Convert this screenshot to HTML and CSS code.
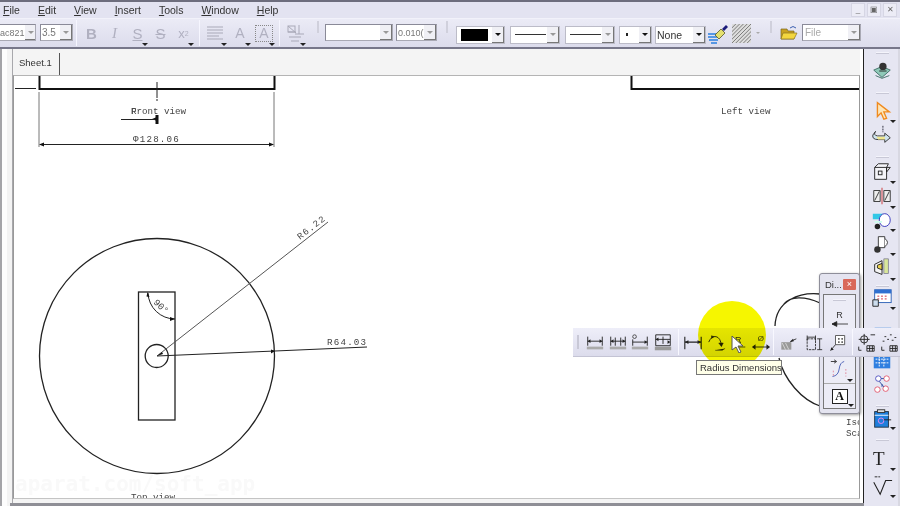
FILE: index.html
```html
<!DOCTYPE html>
<html lang="en">
<head>
<meta charset="utf-8">
<title>Drafting</title>
<link rel="stylesheet" href="styles.css">
</head>
<body>
<div class="app">
  <header class="menubar">
    <nav class="menus">
      <span><u>F</u>ile</span><span><u>E</u>dit</span><span><u>V</u>iew</span><span><u>I</u>nsert</span><span><u>T</u>ools</span><span><u>W</u>indow</span><span><u>H</u>elp</span>
    </nav>
    <div class="winbtns">
      <span class="winbtn">_</span><span class="winbtn">&#9635;</span><span class="winbtn">&#10005;</span>
    </div>
  </header>

  <div class="toolbar">
    <div class="combo w36 flush"><span class="val">ac821</span><i class="arrow"></i></div>
    <div class="combo w33"><span class="val">3.5</span><i class="arrow"></i></div>
    <b class="sep s-a"></b>
    <span class="ic fb">B</span>
    <span class="ic fi">I</span>
    <span class="ic fu">S<i class="drop"></i></span>
    <span class="ic fs">S</span>
    <span class="ic fx">x<sup>2</sup><i class="drop"></i></span>
    <b class="sep s-b"></b>
    <span class="ic24"><svg viewBox="0 0 24 24"><path d="M3 6h16M3 9h16M3 12h16M3 15h12M3 18h16" stroke="#a9a9b8" fill="none"/></svg><i class="drop"></i></span>
    <span class="ic24 ta">A<i class="drop"></i></span>
    <span class="ic24 ta boxed"><em>A</em><i class="drop"></i></span>
    <b class="sep s-c"></b>
    <span class="ic24"><svg viewBox="0 0 24 24"><path d="M5 5l8 7M5 11h8M16 4v9M12 13h9M6 16h12M8 20h8" stroke="#a9a9b8" fill="none"/><rect x="5" y="5" width="7" height="6" fill="none" stroke="#a9a9b8"/></svg><i class="drop"></i></span>
    <b class="grip g-a"></b>
    <div class="combo w68"><i class="arrow"></i></div>
    <div class="combo w41"><span class="val small">0.010(</span><i class="arrow"></i></div>
    <b class="grip g-b"></b>
    <div class="combo lo w49"><span class="swatch"></span><i class="arrow dark"></i></div>
    <div class="combo lo w50"><span class="ln"></span><i class="arrow"></i></div>
    <div class="combo lo w50 m5"><span class="ln"></span><i class="arrow"></i></div>
    <div class="combo lo w33 m4"><span class="dot"></span><i class="arrow dark"></i></div>
    <div class="combo lo w51 m3"><span class="val none">None</span><i class="arrow dark"></i></div>
    <svg class="brush" viewBox="0 0 22 20"><path d="M1 10h9M1 13h11M2 16h9M4 19h6" stroke="#2a7fe0" stroke-width="1.4"/><path d="M8 11l6-6 4 4-6 6z" fill="#e4e070" stroke="#55552a" stroke-width=".8"/><path d="M15 5l4-4 2 2-4 4z" fill="#1a1a7a"/></svg>
    <svg class="hatch" viewBox="0 0 20 20"><rect width="20" height="20" fill="#ddd"/><path d="M-2 6L6-2M-2 10L10-2M-2 14L14-2M-2 18L18-2M0 20L20 0M4 20L22 2M8 20L22 6M12 20L22 10M16 20L22 14" stroke="#777" stroke-width="1"/></svg>
    <i class="tiny"></i>
    <b class="grip g-c"></b>
    <svg class="folder" viewBox="0 0 18 16"><path d="M1 4h6l1 2h6v8H1z" fill="#c9a21f" stroke="#7a6420" stroke-width=".7"/><path d="M3 8h14l-3 6H1z" fill="#f3d63e" stroke="#8a7420" stroke-width=".7"/><path d="M10 3q3-3 6 0" stroke="#3b5fb0" fill="none"/></svg>
    <div class="combo w59 m4"><span class="val muted">File</span><i class="arrow"></i></div>
  </div>

  <div class="main">
    <div class="leftrail"></div>
    <section class="workspace">
      <div class="tabs"><span class="tab">Sheet.1</span></div>
      <div class="sheet">
        <svg class="drawing" viewBox="13 75 847 423">
          <text class="wm" x="15" y="491">aparat.com/soft_app</text>

          <path class="heavy" d="M39.500 76v13h235v-13M631.500 76v13H859"/>
          <path class="thin" d="M15 88.500h21M157 82v16M157 99v2"/>
          <path class="grey" d="M39 92v55M274 92v55"/>
          <path class="thin" d="M41 144.500h232"/>
          <path class="fill" d="M39 144.500l5-2v4zM274 144.500l-5-2v4zM152 119l5-2v4z"/>
          <path class="thin" d="M121 119.500h34"/>
          <rect class="fill" x="155.500" y="115" width="3" height="9"/>
          <text class="cad" x="131" y="114">R</text>
          <text class="cad" x="131" y="114">Front view</text>
          <text class="cad" x="721" y="114">Left view</text>
          <text class="cad wide" x="133" y="141.500">&#934;128.06</text>

          <circle class="part" cx="157" cy="356" r="117.500"/>
          <rect class="part" x="138.500" y="292" width="36.500" height="128"/>
          <circle class="part" cx="156.700" cy="356" r="11.500"/>
          <path class="grey dark" d="M157 356L328 222"/>
          <path class="thin" d="M157 356L275 351L367 347"/>
          <path class="thin" d="M148 293A27 27 0 0 0 175 319"/>
          <path class="fill" d="M147.500 292l2 5-3-.5zM175 319l-5-2v4zM275 351l-4-1.500v4zM157 356l5-4 1 2z"/>
          <text class="cad wide" transform="translate(300 240) rotate(-38)">R6.22</text>
          <text class="cad wide" x="327" y="345">R64.03</text>
          <text class="cad" transform="translate(153 303) rotate(42)">90&#176;</text>
          <text class="cad" x="131" y="500">Top view</text>

          <path class="part" d="M820 294C800 292 776 300 775 326M820 303C805 296 790 296 784 304M779 358C784 380 802 400 820 406"/>
          <text class="cad" x="846" y="425">Iso</text>
          <text class="cad" x="846" y="436">Sca</text>
        </svg>
      </div>
    </section>
    <div class="gap"></div>
    <aside class="rightbar">
      <b class="hgrip"></b>
      <span class="rb after-g"><svg viewBox="0 0 24 24"><path d="M3 11l9-4 9 4-9 8z" fill="#8fc9b8" stroke="#3f6f66"/><path d="M5 17l7 3 8-3" fill="none" stroke="#3f6f66"/><circle cx="13" cy="7" r="4" fill="#333"/><path d="M9 12h8" stroke="#222"/></svg></span>
      <b class="hgrip g2"></b>
      <span class="rb after-g"><svg viewBox="0 0 24 24"><path d="M7 3v15l4-4 3 7 3-1-3-7h6z" fill="#fde6b8" stroke="#f08a1e" stroke-width="1.500"/></svg><i class="drop"></i></span>
      <span class="rb"><svg viewBox="0 0 24 24"><path d="M13 2v7" stroke="#223" stroke-dasharray="2 1"/><path d="M5 8q-3 4 2 5h8v-3l6 5-6 5v-3H8Q1 17 2 12z" fill="#cfe4ee" stroke="#333"/><path d="M6 14h9v3H8z" fill="#f1e88f"/></svg></span>
      <b class="hgrip g3"></b>
      <span class="rb after-g3"><svg viewBox="0 0 24 24"><path d="M4 7h13v13H4zM4 7l4-4h11l-2 4M17 7h4l-4 5z" fill="#f4f4f8" stroke="#222"/><rect x="8" y="11" width="4" height="4" fill="none" stroke="#222"/></svg><i class="drop"></i></span>
      <span class="rb"><svg viewBox="0 0 24 24"><path d="M3 6h7v12H3zM14 6h7v12h-7zM4 17l5-10M15 17l5-10" fill="#eee" stroke="#333"/><path d="M12 3v18" stroke="#c33"/></svg><i class="drop"></i></span>
      <span class="rb short"><svg viewBox="0 0 24 24"><path d="M2 4h11l-3 6H2z" fill="#33c8e6"/><ellipse cx="15" cy="11" rx="6" ry="7" fill="#fff" stroke="#3333bb"/><path d="M4 12h8v2H4z" fill="#cfe"/><circle cx="7" cy="18" r="3" fill="#222"/></svg><i class="drop"></i></span>
      <span class="rb"><svg viewBox="0 0 24 24"><path d="M8 4h7v12H8z" fill="#fff" stroke="#333"/><path d="M15 6q6 4 0 9" fill="#fff" stroke="#333"/><circle cx="7" cy="18" r="3.500" fill="#333"/></svg><i class="drop"></i></span>
      <span class="rb"><svg viewBox="0 0 24 24"><path d="M14 2h5v16h-5z" fill="#d9e79a" stroke="#889"/><path d="M4 8l8-4v15l-8-3z" fill="#f4f4f4" stroke="#222"/><path d="M7 9l5-2v7l-5-2z" fill="#ecd24a" stroke="#222"/></svg><i class="drop"></i></span>
      <b class="hgrip g4"></b>
      <span class="rb"><svg viewBox="0 0 24 24"><rect x="4" y="3" width="18" height="14" fill="#fff" stroke="#2a5fb5"/><rect x="4" y="3" width="18" height="4" fill="#2f6fd0"/><path d="M7 10h12M7 13h12" stroke="#c23" stroke-dasharray="2 2"/><path d="M2 14h6v7H2z" fill="#cde" stroke="#222"/></svg><i class="drop"></i></span>
      <span class="rb pad-hidden"><svg viewBox="0 0 24 24"><rect x="4" y="3" width="18" height="18" fill="#2f7fe0"/></svg></span>
      <span class="rb tbl"><svg viewBox="0 0 24 24"><rect x="3" y="5" width="18" height="15" fill="#2f7fe0"/><path d="M5 10h14M5 14h14M9 7v11M14 7v11" stroke="#fff" stroke-dasharray="2 1"/></svg></span>
      <span class="rb"><svg viewBox="0 0 24 24"><g fill="#fff" stroke="#e05a70"><circle cx="8" cy="5" r="3" stroke="#5050c0"/><circle cx="17" cy="5" r="3"/><circle cx="7" cy="17" r="3"/><circle cx="16" cy="16" r="3"/></g><path d="M11 5h3M9 8l5 6M12 11v3" stroke="#2a4aa0"/></svg></span>
      <b class="hgrip g5"></b>
      <span class="rb"><svg viewBox="0 0 24 24"><rect x="4" y="5" width="15" height="17" fill="#1f7fdc" stroke="#234"/><rect x="7" y="3" width="8" height="3" fill="#ddd" stroke="#333"/><path d="M4 9h15" stroke="#fff"/><circle cx="11" cy="15" r="3" fill="none" stroke="#e8e"/><path d="M14 14h8" stroke="#222"/></svg><i class="drop"></i></span>
      <b class="hgrip g6"></b>
      <span class="rb letter">T<i class="drop"></i></span>
      <span class="rb rough"><svg viewBox="0 0 24 24"><path d="M3 8l7 13L16 6h7" fill="none" stroke="#222" stroke-width="1.200"/><path d="M4 2h3M8 2h2" stroke="#222"/></svg><i class="drop"></i></span>
    </aside>
  </div>
  <div class="statusline"></div>

  <div class="dimpanel">
    <div class="dimtitle"><span>Di...</span><span class="close">&#215;</span></div>
    <div class="diminner">
      <b class="hgrip wide-g"></b>
      <span class="dimic">R<svg viewBox="0 0 24 10"><path d="M2 5h20M2 5l6-3v6z" stroke="#222" fill="#222"/></svg></span>
      <span class="dimspace"></span>
      <span class="dimic2"><svg viewBox="0 0 24 24"><path d="M1 3h6M5 1l3 2-3 2" stroke="#222" fill="none"/><path d="M3 21q7-1 8-9t6-9" fill="none" stroke="#3a50b0"/><path d="M4 14v7M19 12v9" stroke="#e07a90" stroke-dasharray="2 2"/></svg><i class="drop"></i></span>
      <span class="dimline"></span>
      <span class="dimA"><em>A</em><i class="drop"></i></span>
    </div>
  </div>

  <div class="hbar">
    <b class="vgrip"></b>
    <span class="t"><svg viewBox="0 0 22 22"><path d="M3 4v10M19 4v10M3 9h16" stroke="#222" fill="none"/><path d="M3 9l3-2v4zM19 9l-3-2v4z" fill="#222"/><path d="M2 15h18v3H2z" fill="#aaa"/></svg></span>
    <span class="t"><svg viewBox="0 0 22 22"><path d="M3 4v10M19 4v10M8 5v9M14 5v9M3 9h16" stroke="#222" fill="none"/><path d="M3 9l3-2v4zM19 9l-3-2v4z" fill="#222"/><path d="M2 15h18v3H2z" fill="#aaa"/></svg></span>
    <span class="t"><svg viewBox="0 0 22 22"><circle cx="5" cy="4" r="2" fill="none" stroke="#444"/><path d="M3 7v7M19 4v10M3 10h16" stroke="#222" fill="none"/><path d="M19 10l-3-2v4z" fill="#222"/><path d="M2 15h18v3H2z" fill="#aaa"/></svg></span>
    <span class="t"><svg viewBox="0 0 22 22"><path d="M3 2h16v12H3zM3 7h16M11 4v8" stroke="#222" fill="none"/><path d="M3 7l3-2v4zM19 10l-3-2v4z" fill="#222"/><path d="M2 15h18v4H2z" fill="#999"/></svg></span>
    <b class="vsep s1"></b>
    <span class="t"><svg viewBox="0 0 22 22"><path d="M2 4v14M20 4v14M2 10h18" stroke="#222" stroke-width="1.200" fill="none"/><path d="M2 10l4-2v4zM20 10l-4-2v4z" fill="#222"/></svg></span>
    <span class="t"><svg viewBox="0 0 22 22"><path d="M3 10Q6 3 11 4T17 14" stroke="#222" fill="none"/><path d="M17 15l-3-4 5 0zM6 3l3 1-3 2zM10 19h8l3-2" fill="#222" stroke="#222" stroke-width=".5"/></svg></span>
    <span class="t rtool">R<svg viewBox="0 0 22 6"><path d="M3 3h18" stroke="#222"/></svg></span>
    <span class="t dia"><em>&#216;</em><svg viewBox="0 0 22 8"><path d="M3 4h16" stroke="#222"/><path d="M1 4l4-3v6zM21 4l-4-3v6z" fill="#222"/></svg></span>
    <b class="vsep s2"></b>
    <span class="t t25"><svg viewBox="0 0 24 22"><path d="M4 10h12v9H4z" fill="#999"/><path d="M5 11l4 8M9 11l4 8" stroke="#ddd"/><path d="M15 9l7-3" stroke="#222"/><path d="M14 10l4-4 1 3z" fill="#222"/></svg></span>
    <span class="t t25"><svg viewBox="0 0 24 22"><path d="M5 6h10v13H5z" fill="none" stroke="#222" stroke-dasharray="3 1"/><path d="M5 2v6M15 2v6M5 4h10M20 6v13M17 6h6M17 19h6" stroke="#222" fill="none"/></svg></span>
    <span class="t t25"><svg viewBox="0 0 24 22"><path d="M9 2h11v11H9z" fill="#fff" stroke="#444"/><path d="M12 5h2v2h-2zM16 5h2v2h-2zM12 9h2v2h-2zM16 9h2v2h-2z" fill="#666"/><path d="M9 13l-6 7" stroke="#222"/><path d="M3 20l1-4 3 3z" fill="#222"/></svg></span>
    <b class="vsep s3"></b>
    <span class="t"><svg viewBox="0 0 22 22"><circle cx="9" cy="7" r="4" fill="none" stroke="#222"/><path d="M9 1v12M3 7h12" stroke="#222"/><path d="M16 2h5M3 15v4h3M12 14h8v6h-8zM12 17h8M15 14v6M18 14v6" stroke="#222" fill="none"/></svg></span>
    <span class="t"><svg viewBox="0 0 22 22"><path d="M6 4h2M12 2h2M17 5h2M4 9h2M14 8h2M9 7h2" stroke="#222"/><path d="M3 15v4h3M12 14h8v6h-8zM12 17h8M15 14v6M18 14v6" stroke="#222" fill="none"/></svg></span>
  </div>

  <div class="spot"></div>
  <div class="tip">Radius Dimensions</div>
  <svg class="cursor" viewBox="0 0 14 18"><path d="M1 1v14l4-3 3 6 2-1-3-6h5z" fill="#fff" stroke="#555"/></svg>
</div>
</body>
</html>
```

FILE: styles.css
```css
* { box-sizing: border-box; }
html, body { margin: 0; padding: 0; }
body { width: 900px; height: 506px; overflow: hidden; background: #fff; font-family: "Liberation Sans", sans-serif; }
.app { position: relative; width: 900px; height: 506px; overflow: hidden; display: flex; flex-direction: column; background: #e8e8f2; }

.menubar { height: 18px; flex: none; border-top: 2px solid #6d6d7d; background: #e3e3f1; display: flex; justify-content: space-between; align-items: center; font-size: 10.500px; color: #333; }
.menus { display: flex; gap: 18px; padding-left: 3px; }
.menus u { text-decoration-thickness: 1px; }
.winbtns { display: flex; gap: 2px; padding-right: 3px; }
.winbtn { width: 14px; height: 14px; background: #ececf6; border: 1px solid #d6d6e4; display: flex; align-items: center; justify-content: center; font-size: 8px; color: #666; line-height: 1; }

.toolbar { height: 31px; flex: none; display: flex; align-items: center; background: linear-gradient(#ebebf6, #dcdcec); border-top: 1px solid #f2f2fa; border-bottom: 2px solid #77778a; font-size: 10px; color: #444; }
.combo { height: 17px; margin-top: -1px; background: #fff; display: flex; align-items: center; justify-content: space-between; border: 1px solid #a9a9b4; border-left-color: #8a8a98; border-top-color: #8a8a98; flex: none; overflow: hidden; position: relative; font-size: 10px; }
.combo.lo { height: 18px; margin-top: 3px; border-color: #bcbcc8; }
.flush { border-left: 0; margin-right: 4px; }
.w36 { width: 36px; } .w33 { width: 33px; } .w68 { width: 68px; margin-right: 3px; } .w41 { width: 41px; } .w49 { width: 49px; margin-right: 5px; } .w50 { width: 50px; } .w51 { width: 51px; } .w59 { width: 59px; }
.m5 { margin-left: 5px; } .m4 { margin-left: 4px; } .m3 { margin-left: 3px; }
.val { padding-left: 1px; color: #777; white-space: nowrap; }
.val.small { font-size: 9px; }
.w36 .val { font-size: 9px; padding-left: 0; }
.val.none { color: #333; font-size: 10.500px; }
.val.muted { color: #aaa; padding-left: 2px; }
.arrow { width: 12px; height: 100%; background: #f0f0f5; border-bottom: 1px solid #777; border-right: 1px solid #777; position: relative; flex: none; margin-left: auto; }
.arrow::after { content: ""; position: absolute; left: 3px; top: 6px; border: 3px solid transparent; border-top: 3px solid #999; }
.arrow.dark::after { border-top-color: #111; }
.swatch { width: 27px; height: 12px; background: #000; margin-left: 4px; }
.ln { width: 31px; height: 1px; background: #333; margin-left: 4px; }
.dot { width: 2px; height: 3px; background: #222; margin-left: 6px; }

.sep { width: 1px; height: 26px; background: #c6c6d4; border-right: 1px solid #f6f6ff; flex: none; }
.s-a { margin: 0 3px 0 3px; } .s-b { margin: 0 4px 0 4px; } .s-c { margin: 0 3px 0 3px; }
.grip { width: 2px; height: 12px; margin-top: -12px; background: #d0d0dc; flex: none; }
.g-a { margin-left: 10px; margin-right: 6px; } .g-b { margin-left: 9px; margin-right: 8px; } .g-c { margin-left: 10px; margin-right: 8px; }

.ic, .ic24 { position: relative; flex: none; height: 26px; display: flex; align-items: center; justify-content: center; color: #b0b0c0; font-family: "Liberation Sans", sans-serif; }
.ic { width: 23px; font-size: 15px; }
.ic24 { width: 24px; }
.ic24 svg { width: 24px; height: 24px; }
.fb { font-weight: 700; }
.fi { font-style: italic; font-family: "Liberation Serif", serif; }
.fu { text-decoration: underline; }
.fs { text-decoration: line-through; }
.fx { font-size: 13px; }
.fx sup { font-size: 7px; }
.ta { font-size: 14px; }
.boxed em { font-style: normal; border: 1px dotted #888; padding: 0 3px; line-height: 15px; }
.drop { position: absolute; right: 1px; bottom: 0; width: 0; height: 0; border: 3px solid transparent; border-top: 3px solid #222; border-bottom: 0; }

.brush { width: 22px; height: 20px; flex: none; margin-top: 1px; margin-left: 1px; }
.hatch { width: 19px; height: 19px; flex: none; margin: 1px 0 0 3px; }
.tiny { width: 0; height: 0; border: 2px solid transparent; border-top: 2px solid #aaa; border-bottom: 0; margin-left: 5px; flex: none; }
.folder { width: 18px; height: 16px; flex: none; }

.main { flex: 1; min-height: 0; display: flex; }
.leftrail { width: 13px; flex: none; background: #f3f3f3; border-left: 2px solid #a4a4a8; border-right: 1px solid #a8a8ac; box-shadow: inset 5px 0 0 #fdfdfd; }
.workspace { width: 847px; flex: none; display: flex; flex-direction: column; background: #f4f4f4; }
.tabs { height: 26px; flex: none; padding-left: 6px; padding-top: 3px; }
.tab { display: inline-block; height: 22px; width: 41px; line-height: 20px; font-size: 9.500px; color: #333; border-right: 1px solid #555; }
.sheet { height: 424px; flex: none; background: #fff; border: 1px solid #b4b4b4; border-left-color: #999; border-right-color: #999; border-bottom-color: #c4c4c4; overflow: hidden; }
.drawing { display: block; width: 847px; height: 423px; margin: -1px 0 0 -1px; }
.heavy { fill: none; stroke: #111; stroke-width: 2; }
.thin { fill: none; stroke: #222; stroke-width: 1; }
.grey { fill: none; stroke: #777; stroke-width: 1; }
.grey.dark { stroke: #555; }
.fill { fill: #111; }
.part { fill: none; stroke: #222; stroke-width: 1.300; }
.cad { font-family: "Liberation Mono", monospace; font-size: 9.200px; fill: #444; }
.wide { letter-spacing: 1.200px; }
.wm { font-family: "DejaVu Sans Mono", monospace; font-size: 21px; font-weight: 700; fill: #f9f9f9; }

.gap { width: 4px; flex: none; background: #fff; border-right: 1px solid #222; }
.rightbar { flex: 1; min-width: 0; background: #e6e6f2; display: flex; flex-direction: column; align-items: center; padding-top: 3px; box-shadow: inset -2px 0 0 #d8d8e2; }
.hgrip { display: block; width: 13px; height: 2px; background: #f4f4fb; border-bottom: 1px solid #c8c8d6; flex: none; }
.rb { position: relative; display: block; width: 30px; height: 24.500px; flex: none; padding-left: 4px; }
.rb.short { height: 23px; }
.rb svg { width: 22px; height: 22px; display: block; }
.rb .drop { right: 1px; bottom: 1px; }
.after-g { margin-top: 6px; }
.after-g3 { margin-top: 3px; }
.g2 { margin-top: 7px; }
.g3 { margin-top: 7px; }
.g4 { margin-top: 3px; }
.g5 { margin-top: 6px; }
.g6 { margin-top: 8px; }
.pad-hidden { margin-top: 14px; }
.letter { font-family: "Liberation Serif", serif; font-size: 19px; line-height: 24px; color: #222; padding-left: 6px; margin-top: 6px; }
.rough { margin-top: 3px; }

.statusline { position: absolute; left: 10px; right: 36px; bottom: 0; height: 3px; background: #8f8f96; }

.dimpanel { position: absolute; left: 819px; top: 273px; width: 41px; height: 141px; background: #e4e4f0; border: 1px solid #8e8e9a; border-radius: 3px; box-shadow: 1px 1px 3px rgba(0,0,0,.4); padding: 3px; display: flex; flex-direction: column; }
.dimtitle { display: flex; justify-content: space-between; align-items: center; height: 15px; font-size: 9.500px; color: #333; padding-left: 2px; flex: none; }
.close { width: 13px; height: 11px; background: #d9685a; color: #fff; font-size: 9px; line-height: 11px; text-align: center; border-radius: 1px; }
.diminner { flex: 1; min-height: 0; margin-top: 2px; margin-bottom: 1px; border: 1px solid #777; background: #ececf6; display: flex; flex-direction: column; align-items: center; padding-top: 4px; position: relative; }
.wide-g { width: 13px; }
.dimic { font-size: 9px; line-height: 10px; color: #333; text-align: center; margin-top: 9px; width: 24px; }
.dimic svg { width: 20px; height: 8px; display: block; margin: 0 auto; }
.dimspace { height: 21px; flex: none; }
.dimic2 { position: relative; display: block; width: 28px; height: 24px; margin-top: 9px; padding-left: 4px; flex: none; }
.dimic2 svg { width: 20px; height: 22px; display: block; }
.dimline { width: 100%; height: 1px; background: #aaa; margin-top: 1px; flex: none; }
.dimA { position: relative; width: 28px; height: 22px; display: flex; align-items: center; justify-content: center; margin-top: 1px; flex: none; }
.dimA em { font-style: normal; font-family: "Liberation Serif", serif; font-weight: 700; font-size: 12px; color: #111; width: 16px; height: 15px; border: 1px solid #222; background: #fff; line-height: 13px; text-align: center; }
.dimA .drop { right: 0; bottom: 0; }

.hbar { position: absolute; left: 573px; top: 328px; width: 327px; height: 29px; background: linear-gradient(#eeeef9, #dcdcec); border-bottom: 1px solid #c4c4d4; display: flex; align-items: center; padding-left: 4px; }
.vgrip { width: 2px; height: 14px; background: #c8c8d6; margin-right: 5px; flex: none; }
.t { display: flex; flex-direction: column; align-items: center; justify-content: center; width: 22.500px; height: 24px; flex: none; font-size: 9px; color: #333; line-height: 8px; margin-top: 2px; }
.t svg { width: 20px; height: 20px; display: block; }
.t25 { width: 25px; }
.rtool svg { height: 6px; width: 16px; }
.dia em { font-style: normal; font-size: 8px; }
.dia svg { width: 20px; height: 8px; }
.vsep { width: 1px; height: 26px; background: #c4c4d2; border-right: 1px solid #f8f8ff; flex: none; }
.s1 { margin: 0 3px 0 4px; } .s2 { margin: 0 1px 0 1px; } .s3 { margin: 0 2px 0 2px; }

.spot { position: absolute; left: 698px; top: 301px; width: 68px; height: 68px; border-radius: 50%; background: #f6f600; mix-blend-mode: multiply; }
.tip { position: absolute; left: 696px; top: 360px; width: 86px; height: 15px; background: #ffffe8; border: 1px solid #777; font-size: 9.500px; line-height: 13px; color: #333; padding-left: 3px; white-space: nowrap; overflow: hidden; }
.cursor { position: absolute; left: 731px; top: 335px; width: 14px; height: 18px; }
```
